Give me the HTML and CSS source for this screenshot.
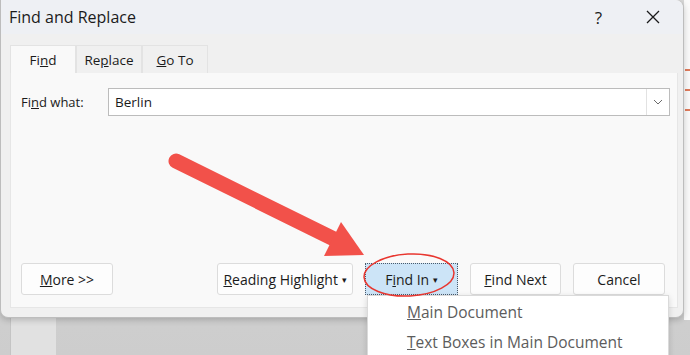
FILE: index.html
```html
<!DOCTYPE html>
<html lang="en">

<head>
    <meta charset="UTF-8">
    <title>Find and Replace</title>
    <link rel="stylesheet" href="styles.css">
</head>

<body>
    <div class="screen">
        <div class="edge-marks">
            <span></span>
            <span></span>
            <span></span>
        </div>
        <div class="doc-strip"></div>

        <div class="dialog">
            <div class="titlebar">
                <span class="title">Find and Replace</span>
                <span class="help">?</span>
                <svg class="close" width="14" height="14" viewBox="0 0 14 14">
                    <path d="M1 1 L13 13 M13 1 L1 13" stroke="#1a1a1a" stroke-width="1.3" fill="none" />
                </svg>
            </div>

            <div class="tabs">
                <div class="tab active">Fi<u>n</u>d</div>
                <div class="tab">Re<u>p</u>lace</div>
                <div class="tab"><u>G</u>o To</div>
            </div>

            <div class="panel">
                <div class="find-row">
                    <label class="label">Fi<u>n</u>d what:</label>
                    <div class="combo">
                        <span class="combo-value">Berlin</span>
                        <span class="combo-btn">
                            <svg width="10" height="6" viewBox="0 0 10 6">
                                <path d="M1 1 L5 5 L9 1" stroke="#6b6b6b" stroke-width="1" fill="none" />
                            </svg>
                        </span>
                    </div>
                </div>

                <div class="button-row">
                    <button class="btn more"><u>M</u>ore &gt;&gt;</button>
                    <div class="button-group">
                        <button class="btn reading"><u>R</u>eading Highlight <span class="caret">▾</span></button>
                        <button class="btn find-in">F<u>i</u>nd In <span class="caret">▾</span></button>
                        <button class="btn find-next"><u>F</u>ind Next</button>
                        <button class="btn cancel">Cancel</button>
                    </div>
                </div>
            </div>
        </div>

        <div class="menu">
            <div class="menu-item"><u>M</u>ain Document</div>
            <div class="menu-item"><u>T</u>ext Boxes in Main Document</div>
        </div>

        <svg class="annotation" width="690" height="355" viewBox="0 0 690 355">
            <g fill="#f2514a">
                <line x1="176" y1="161" x2="338" y2="241" stroke="#f2514a" stroke-width="15" stroke-linecap="round" />
                <path d="M341 222 L364 255 L324 256 Z" />
            </g>
            <ellipse cx="409" cy="275" rx="45" ry="21" transform="rotate(-3 409 275)"
                fill="none" stroke="#e8362f" stroke-width="1.5" />
        </svg>
    </div>
</body>

</html>
```

FILE: styles.css
```css
body {
    margin: 0;
    font-family: 'Open Sans', 'Noto Sans', sans-serif;
    color: #1b1b1b;
}

.screen {
    position: relative;
    width: 690px;
    height: 355px;
    overflow: hidden;
    background: linear-gradient(#d9d9d9, #cdcdcd);
}

.edge-marks {
    position: absolute;
    top: 0;
    right: 0;
    width: 6px;
    height: 320px;
    background: #fafafa;
}

.edge-marks span {
    display: block;
    height: 2px;
    margin: 0 0 18px 1px;
    background: #e07a5a;
}

.edge-marks span:first-child {
    margin-top: 69px;
}

.doc-strip {
    position: absolute;
    left: 10px;
    top: 318px;
    width: 45px;
    height: 37px;
    background: #e1e1e1;
    border-left: 1px solid #c4c4c4;
}

.dialog {
    position: relative;
    width: 684px;
    height: 318px;
    background: #f0f0f0;
    border: 1px solid #bdbdbd;
    border-top: none;
    border-radius: 0 8px 8px 8px;
    box-sizing: border-box;
    box-shadow: 0 2px 6px rgba(0, 0, 0, 0.2);
}

.titlebar {
    height: 34px;
    display: flex;
    align-items: center;
    background: #eef0f4;
    border-radius: 0 8px 0 0;
    padding-left: 8px;
}

.title {
    font-size: 16px;
    flex: 1;
}

.help {
    font-size: 17px;
    margin-right: 44px;
}

.close {
    margin-right: 23px;
}

.tabs {
    display: flex;
    padding: 11px 0 0 9px;
}

.tab {
    width: 66px;
    height: 28px;
    font-size: 13.5px;
    display: flex;
    align-items: center;
    justify-content: center;
    background: #f0f0f0;
    border: 1px solid #e3e3e3;
    border-bottom: none;
    box-sizing: border-box;
}

.tab.active {
    background: #f9f9f9;
}

.panel {
    height: 235px;
    margin: 0 5px 0 9px;
    background: #f9f9f9;
    border: 1px solid #e6e6e6;
    border-top: none;
    box-sizing: border-box;
    padding: 15px 0 0 10px;
}

.find-row {
    display: flex;
    align-items: center;
}

.label {
    width: 87px;
    font-size: 13px;
}

.combo {
    width: 562px;
    height: 28px;
    display: flex;
    align-items: center;
    background: #fff;
    border: 1px solid #bcbcbc;
    box-sizing: border-box;
}

.combo-value {
    flex: 1;
    padding-left: 6px;
    font-size: 13.5px;
}

.combo-btn {
    width: 22px;
    height: 26px;
    display: flex;
    align-items: center;
    justify-content: center;
    border-left: 1px solid #e2e2e2;
}

.button-row {
    display: flex;
    margin-top: 147px;
}

.button-group {
    display: flex;
    gap: 12px;
    margin-left: 104px;
}

.btn {
    height: 32px;
    font-family: inherit;
    font-size: 14px;
    color: #1b1b1b;
    background: #fdfdfd;
    border: 1px solid #dcdcdc;
    border-radius: 3px;
    padding: 0;
}

.more {
    width: 92px;
}

.reading {
    width: 136px;
}

.find-in {
    width: 93px;
    background: #cce4f7;
    border: 1px dotted #4a5a6a;
    border-radius: 0;
}

.find-next {
    width: 91px;
}

.cancel {
    width: 92px;
}

.caret {
    font-size: 9px;
    vertical-align: 2px;
}

.menu {
    position: absolute;
    left: 367px;
    top: 295px;
    width: 302px;
    height: 70px;
    background: #fff;
    border: 1px solid #dadada;
    box-sizing: border-box;
    box-shadow: 0 2px 6px rgba(0, 0, 0, 0.15);
    padding-top: 1px;
}

.menu-item {
    height: 30px;
    line-height: 30px;
    padding-left: 39px;
    font-size: 15.5px;
    color: #5c5c5c;
}

.annotation {
    position: absolute;
    left: 0;
    top: 0;
    pointer-events: none;
}
```
